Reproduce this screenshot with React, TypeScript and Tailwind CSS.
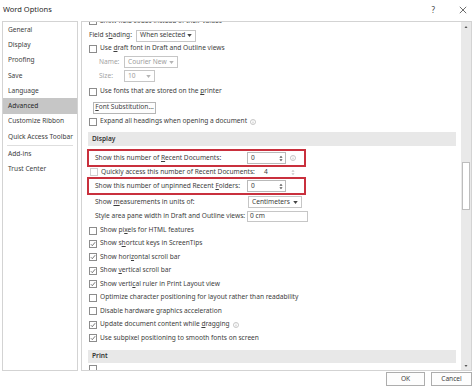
import type { ReactNode } from 'react'

const NAV = ['General', 'Display', 'Proofing', 'Save', 'Language', 'Advanced', 'Customize Ribbon', 'Quick Access Toolbar']
const NAV2 = ['Add-ins', 'Trust Center']

function Box({ checked, faded }: { checked?: boolean; faded?: boolean }) {
  return (
    <span
      className={`flex h-[8px] w-[8px] shrink-0 items-center justify-center border bg-white ${
        faded ? 'border-[#cfcfcf]' : 'border-[#8c8c8c]'
      }`}
    >
      {checked && (
        <svg viewBox="0 0 8 8" className="h-[6px] w-[6px]">
          <path d="M1.2 4.3 L3.1 6.2 L6.9 1.6" fill="none" stroke="#4a4a4a" strokeWidth="1" />
        </svg>
      )}
    </span>
  )
}

function Info() {
  return (
    <svg viewBox="0 0 8 8" className="h-[6px] w-[6px] shrink-0">
      <circle cx="4" cy="4" r="3.4" fill="none" stroke="#9a9a9a" strokeWidth="0.7" />
      <path d="M4 3.4 V6 M4 2 V2.6" stroke="#9a9a9a" strokeWidth="0.8" />
    </svg>
  )
}

function Caret() {
  return (
    <svg viewBox="0 0 6 4" className="h-[3px] w-[5px] shrink-0">
      <path d="M0 0 H6 L3 4 Z" fill="#444" />
    </svg>
  )
}

function Spin({ faded }: { faded?: boolean }) {
  const c = faded ? '#c8c8c8' : '#555'
  return (
    <svg viewBox="0 0 5 8" className="h-[7px] w-[4px] shrink-0">
      <path d="M0.5 3 L2.5 0.5 L4.5 3 Z M0.5 5 L2.5 7.5 L4.5 5 Z" fill={c} />
    </svg>
  )
}

function Check({ label, checked, h, info }: { label: ReactNode; checked?: boolean; h: string; info?: boolean }) {
  return (
    <div className={`flex shrink-0 items-center gap-[3px] pl-[7px] ${h}`}>
      <Box checked={checked} />
      <span className="whitespace-nowrap">{label}</span>
      {info && <Info />}
    </div>
  )
}

function Select({ value, w, dim }: { value: string; w: string; dim?: boolean }) {
  return (
    <div className={`flex h-[12px] items-center justify-between border border-[#c6c6c6] bg-white pl-[3px] pr-[3px] ${w}`}>
      <span className={dim ? 'text-[#9d9d9d]' : ''}>{value}</span>
      {dim ? (
        <svg viewBox="0 0 6 4" className="h-[3px] w-[5px]">
          <path d="M0 0 H6 L3 4 Z" fill="#b5b5b5" />
        </svg>
      ) : (
        <Caret />
      )}
    </div>
  )
}

function SpinField() {
  return (
    <div className="flex h-[12px] w-[39px] items-center justify-between border border-[#b9b9b9] bg-white pl-[3px] pr-[2px]">
      <span>0</span>
      <Spin />
    </div>
  )
}

function Header({ title, className }: { title: string; className: string }) {
  return (
    <div className={`ml-[6px] mr-[5px] flex shrink-0 items-center bg-[#e8e8e8] pl-[4px] font-semibold text-[#333] ${className}`}>
      {title}
    </div>
  )
}

export default function App() {
  return (
    <div className="h-[389px] w-[474px] overflow-hidden bg-white font-['Noto_Sans',sans-serif] text-[#3d3d3d]">
      <div className="flex h-[21px] items-center justify-between pb-[2px] pl-[3px] pr-[7px]">
        <span className="text-[7.5px] text-[#1f1f1f]">Word Options</span>
        <div className="flex items-center gap-[24px]">
          <span className="text-[8px] text-[#444]">?</span>
          <svg viewBox="0 0 10 10" className="h-[8px] w-[8px]">
            <path d="M1 1 L9 9 M9 1 L1 9" stroke="#333" strokeWidth="0.9" />
          </svg>
        </div>
      </div>

      <div className="flex h-[350px] gap-[3px] pl-[2px]">
        <nav className="w-[76px] border border-[#d3d3d3] text-[6.6px]">
          {NAV.map((n) => (
            <div
              key={n}
              className={`flex h-[15.3px] items-center pl-[5px] ${n === 'Advanced' ? 'bg-[#c6c6c6] text-[#262626]' : ''}`}
            >
              {n}
            </div>
          ))}
          <div className="mx-[4px] my-[0.5px] h-px bg-[#dedede]" />
          {NAV2.map((n) => (
            <div key={n} className="flex h-[15.3px] items-center pl-[5px]">
              {n}
            </div>
          ))}
        </nav>

        <div className="flex w-[391px] border border-[#d3d3d3]">
          <div className="flex min-w-0 flex-1 flex-col overflow-hidden text-[6.6px] leading-none">
            <div className="-mt-[9px]" />
            <Check h="h-[16px]" label="Show field codes instead of their values" />
            <div className="flex h-[13px] shrink-0 items-center pl-[7px]">
              <span className="w-[47px]">
                Field s<u>h</u>ading:
              </span>
              <Select value="When selected" w="w-[60px]" />
            </div>
            <Check
              h="h-[13px]"
              label={
                <>
                  Use <u>d</u>raft font in Draft and Outline views
                </>
              }
            />
            <div className="flex h-[14px] shrink-0 items-center pl-[17px]">
              <span className="w-[25px] text-[#a3a3a3]">Name:</span>
              <Select value="Courier New" w="w-[54px]" dim />
            </div>
            <div className="flex h-[14px] shrink-0 items-center pl-[17px]">
              <span className="w-[25px] text-[#a3a3a3]">Size:</span>
              <Select value="10" w="w-[31px]" dim />
            </div>
            <Check
              h="h-[17px]"
              label={
                <>
                  Use fonts that are stored on the <u>p</u>rinter
                </>
              }
            />
            <div className="flex h-[15px] shrink-0 items-center pl-[11px]">
              <div className="flex h-[12px] w-[63px] items-center justify-center border border-[#b5b5b5] bg-[#fdfdfd]">
                <span>
                  <u>F</u>ont Substitution...
                </span>
              </div>
            </div>
            <Check h="h-[13px]" label="Expand all headings when opening a document" info />

            <Header title="Display" className="mt-[4px] h-[14px]" />

            <div className="ml-[5px] mt-[3px] flex h-[18px] w-[219px] shrink-0 items-center border-2 border-[#c9303d] pl-[6px]">
              <span className="w-[152px] whitespace-nowrap">
                Show this number of <u>R</u>ecent Documents:
              </span>
              <SpinField />
              <span className="ml-[4px]">
                <Info />
              </span>
            </div>
            <div className="flex h-[10px] shrink-0 items-center gap-[3px] pl-[8px]">
              <Box faded />
              <span className="whitespace-nowrap">Quickly access this number of Recent Documents:</span>
              <div className="ml-[2px] flex h-[10px] w-[38px] items-center justify-between pl-[4px] pr-[3px]">
                <span>4</span>
                <Spin faded />
              </div>
            </div>
            <div className="ml-[5px] flex h-[18px] w-[219px] shrink-0 items-center border-2 border-[#c9303d] pl-[6px]">
              <span className="w-[152px] whitespace-nowrap">
                Show this number of unpinned Recent <u>F</u>olders:
              </span>
              <SpinField />
            </div>
            <div className="flex h-[14px] shrink-0 items-center pl-[13px]">
              <span className="w-[153px] whitespace-nowrap">
                Show <u>m</u>easurements in units of:
              </span>
              <Select value="Centimeters" w="w-[54px]" />
            </div>
            <div className="flex h-[15px] shrink-0 items-center pl-[13px]">
              <span className="w-[152px] whitespace-nowrap">Style area pane width in Draft and Outline views:</span>
              <div className="flex h-[11px] w-[61px] items-center border border-[#c6c6c6] bg-white pl-[2px]">0 cm</div>
            </div>
            <Check
              h="h-[13px]"
              label={
                <>
                  Show pi<u>x</u>els for HTML features
                </>
              }
            />
            <Check
              h="h-[13px]"
              checked
              label={
                <>
                  Show s<u>h</u>ortcut keys in ScreenTips
                </>
              }
            />
            <Check
              h="h-[14px]"
              checked
              label={
                <>
                  Show hori<u>z</u>ontal scroll bar
                </>
              }
            />
            <Check
              h="h-[13px]"
              checked
              label={
                <>
                  Show <u>v</u>ertical scroll bar
                </>
              }
            />
            <Check
              h="h-[14px]"
              checked
              label={
                <>
                  Show verti<u>c</u>al ruler in Print Layout view
                </>
              }
            />
            <Check h="h-[13px]" label="Optimize character positioning for layout rather than readability" />
            <Check h="h-[14px]" label="Disable hardware graphics acceleration" />
            <Check
              h="h-[13px]"
              checked
              info
              label={
                <>
                  Update document content while <u>d</u>ragging
                </>
              }
            />
            <Check h="h-[14px]" checked label="Use subpixel positioning to smooth fonts on screen" />

            <Header title="Print" className="mt-[5px] h-[13px]" />
            <div className="shrink-0 pl-[7px] pt-[2px]">
              <Box />
            </div>
          </div>

          <div className="flex w-[10px] flex-col bg-[#e9e9e9]">
            <div className="flex h-[9px] items-center justify-center">
              <svg viewBox="0 0 6 4" className="h-[2px] w-[4px]">
                <path d="M0 4 H6 L3 0 Z" fill="#555" />
              </svg>
            </div>
            <div className="h-[131px]" />
            <div className="mx-[1px] h-[48px] border border-[#bdbdbd] bg-white" />
            <div className="flex-1" />
            <div className="flex h-[9px] items-center justify-center">
              <svg viewBox="0 0 6 4" className="h-[2px] w-[4px]">
                <path d="M0 0 H6 L3 4 Z" fill="#555" />
              </svg>
            </div>
          </div>
        </div>
      </div>

      <div className="flex justify-end gap-[6px] pr-[2px] pt-[1px] text-[6.6px]">
        <div className="flex h-[14px] w-[39px] items-center justify-center border border-[#adadad] bg-[#fdfdfd]">OK</div>
        <div className="flex h-[14px] w-[41px] items-center justify-center border border-[#adadad] bg-[#fdfdfd]">
          Cancel
        </div>
      </div>
    </div>
  )
}
